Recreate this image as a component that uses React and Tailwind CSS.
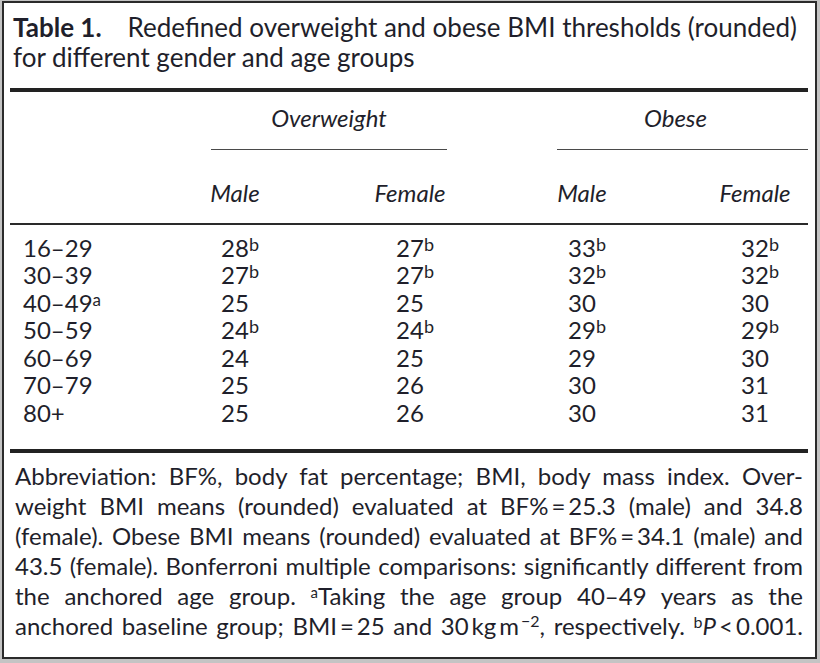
import React from "react";

const rows = [
  ["16–29", "", ["28", "b"], ["27", "b"], ["33", "b"], ["32", "b"]],
  ["30–39", "", ["27", "b"], ["27", "b"], ["32", "b"], ["32", "b"]],
  ["40–49", "a", ["25", ""], ["25", ""], ["30", ""], ["30", ""]],
  ["50–59", "", ["24", "b"], ["24", "b"], ["29", "b"], ["29", "b"]],
  ["60–69", "", ["24", ""], ["25", ""], ["29", ""], ["30", ""]],
  ["70–79", "", ["25", ""], ["26", ""], ["30", ""], ["31", ""]],
  ["80+", "", ["25", ""], ["26", ""], ["30", ""], ["31", ""]],
];

function Value({ v }) {
  return (
    <div className="text-center">
      {v[0]}
      {v[1] && <sup className="text-[18px] top-[-6px] -mr-[10px]">{v[1]}</sup>}
    </div>
  );
}

export default function App() {
  return (
    <div className="w-[820px] h-[663px] bg-[#c4c4c4] pl-[2px] pt-[1px] pr-[3px] pb-[4px]">
      <div className="h-full border-2 border-[#2b2b2b] bg-white pl-[6px] pr-[7px] text-[#1f1f2b] font-['Lato',sans-serif] text-[24px]">
        {/* Caption */}
        <div className="pt-[10px] pl-[3px] text-[26px] leading-[29.5px] whitespace-nowrap">
          <span className="font-bold mr-[26px]">Table 1.</span>
          Redefined overweight and obese BMI thresholds (rounded)
          <br />
          for different gender and age groups
        </div>

        <div className="mt-[15.5px] h-[4px] bg-[#222]" />

        {/* Group header */}
        <div className="flex italic leading-[29px]">
          <div className="ml-[201px] w-[236px] pt-[11px] pb-[17px] border-b border-[#4a4a4a] text-center">
            Overweight
          </div>
          <div className="ml-[110px] w-[251px] pt-[11px] pb-[17px] pr-[14px] border-b border-[#4a4a4a] text-center">
            Obese
          </div>
        </div>

        {/* Sub header */}
        <div className="grid grid-cols-[102px_246px_104px_240px_106px] italic leading-[29px] pt-[28px] pb-[16px]">
          <div />
          <div className="text-center">Male</div>
          <div className="text-center">Female</div>
          <div className="text-center">Male</div>
          <div className="text-center">Female</div>
        </div>

        <div className="h-[2px] bg-[#2a2a2a]" />

        {/* Body */}
        <div className="pt-[9px] pb-[22.5px] leading-[27.5px]">
          {rows.map((r) => (
            <div key={r[0]} className="grid grid-cols-[102px_246px_104px_240px_106px]">
              <div className="pl-[13px]">
                {r[0]}
                {r[1] && <sup className="text-[17px] top-[-6px]">{r[1]}</sup>}
              </div>
              <Value v={r[2]} />
              <Value v={r[3]} />
              <Value v={r[4]} />
              <Value v={r[5]} />
            </div>
          ))}
        </div>

        <div className="h-[4px] bg-[#222]" />

        {/* Footnote */}
        <div className="pt-[8px] pl-[5px] pr-[5px] text-[24px] leading-[30px]">
          <div className="text-justify [text-align-last:justify]">
            Abbreviation: BF%, body fat percentage; BMI, body mass index. Over-
          </div>
          <div className="text-justify [text-align-last:justify]">
            weight BMI means (rounded) evaluated at BF%{"\u2009=\u2009"}25.3 (male) and 34.8
          </div>
          <div className="text-justify [text-align-last:justify]">
            (female). Obese BMI means (rounded) evaluated at BF%{"\u2009=\u2009"}34.1 (male) and
          </div>
          <div className="text-justify [text-align-last:justify]">
            43.5 (female). Bonferroni multiple comparisons: significantly different from
          </div>
          <div className="text-justify [text-align-last:justify]">
            the anchored age group. <sup className="text-[15px] top-[-7px]">a</sup>Taking the age group 40–49 years as the
          </div>
          <div className="text-justify [text-align-last:justify] whitespace-nowrap">
            anchored baseline group; BMI{"\u2009=\u2009"}25 and 30{"\u2009"}kg{"\u2009"}m
            <sup className="text-[16px] top-[-8px]">{"\u2009"}−2</sup>, respectively.{" "}
            <sup className="text-[16px] top-[-7px]">b</sup>
            <span className="italic">P</span>
            {"\u2009<\u2009"}0.001.
          </div>
        </div>
      </div>
    </div>
  );
}
